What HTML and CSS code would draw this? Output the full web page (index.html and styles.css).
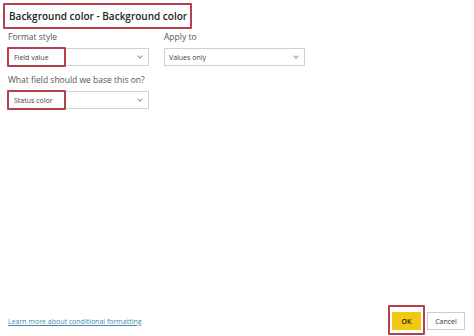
FILE: index.html
```html
<!DOCTYPE html>
<html>

<head>
    <meta charset="utf-8">
    <link rel="stylesheet" href="styles.css">
</head>

<body>
    <section id="dialog">
        <h1 class="title"><span class="hl">Background color - Background color</span></h1>
        <div class="row">
            <div class="field">
                <label class="fs-label">Format style</label>
                <div class="select">
                    <span class="hl hl-value">Field value</span>
                    <span class="chev"></span>
                </div>
            </div>
            <div class="field">
                <label class="fs-label">Apply to</label>
                <div class="select">
                    <span class="value">Values only</span>
                    <span class="chev"></span>
                </div>
            </div>
        </div>
        <div class="row">
            <div class="field">
                <label class="fs-label">What field should we base this on?</label>
                <div class="select">
                    <span class="hl hl-value">Status color</span>
                    <span class="chev"></span>
                </div>
            </div>
        </div>
        <footer class="footer">
            <a class="learn" href="#">Learn more about conditional formatting</a>
            <div class="buttons">
                <span class="hl hl-btn"><button class="btn ok">OK</button></span>
                <button class="btn">Cancel</button>
            </div>
        </footer>
    </section>
</body>

</html>
```

FILE: styles.css
```css
body {
    margin: 0;
    font-family: 'Open Sans', 'Noto Sans', sans-serif;
    font-size: 7px;
    color: #333;
    background: #fff;
}

#dialog {
    height: 336px;
    box-sizing: border-box;
    padding: 3px 9px 0 8px;
    display: flex;
    flex-direction: column;
}

.hl {
    border: 2px solid #b5404e;
    border-radius: 1px;
}

.title {
    margin: 0 0 0 -5px;
    font-size: 10px;
    font-weight: 600;
    color: #252423;
    line-height: 22px;
}

.title .hl {
    display: inline-block;
    padding: 0 3px 0 4px;
}

.row {
    display: flex;
    gap: 15px;
}

.field {
    width: 141px;
}

.fs-label {
    display: block;
    color: #555;
    font-size: 8.5px;
    line-height: 11px;
    margin: 2px 0 6px;
}

.select {
    height: 16px;
    border: 1px solid #d0d0d0;
    display: flex;
    align-items: center;
    justify-content: space-between;
    margin-bottom: 6px;
}

.value {
    padding-left: 4px;
    color: #444;
}

.hl-value {
    align-self: stretch;
    margin: -2px 0 -2px -2px;
    padding: 0 0 0 5px;
    width: 50px;
    display: flex;
    align-items: center;
    color: #444;
}

.chev {
    width: 3px;
    height: 3px;
    border-right: 1px solid #999;
    border-bottom: 1px solid #999;
    transform: rotate(45deg);
    margin: 0 6px 2px 0;
}

.footer {
    margin-top: auto;
    margin-bottom: 1px;
    display: flex;
    align-items: center;
    justify-content: space-between;
}

.learn {
    color: #3d8da8;
    font-size: 7px;
    text-decoration: underline;
    margin-top: 3px;
}

.buttons {
    display: flex;
    align-items: flex-end;
    gap: 2px;
}

.hl-btn {
    display: inline-block;
    padding: 5px 2px 3px;
    line-height: 0;
}

.btn {
    font-family: inherit;
    font-size: 7px;
    height: 18px;
    padding: 0;
    background: #fff;
    border: 1px solid #ccc;
    color: #333;
    width: 38px;
}

.buttons > .btn {
    margin-bottom: 5px;
}

.btn.ok {
    background: #f2c811;
    border-color: #f2c811;
    width: 29px;
    color: #252423;
    font-weight: 600;
}
```
